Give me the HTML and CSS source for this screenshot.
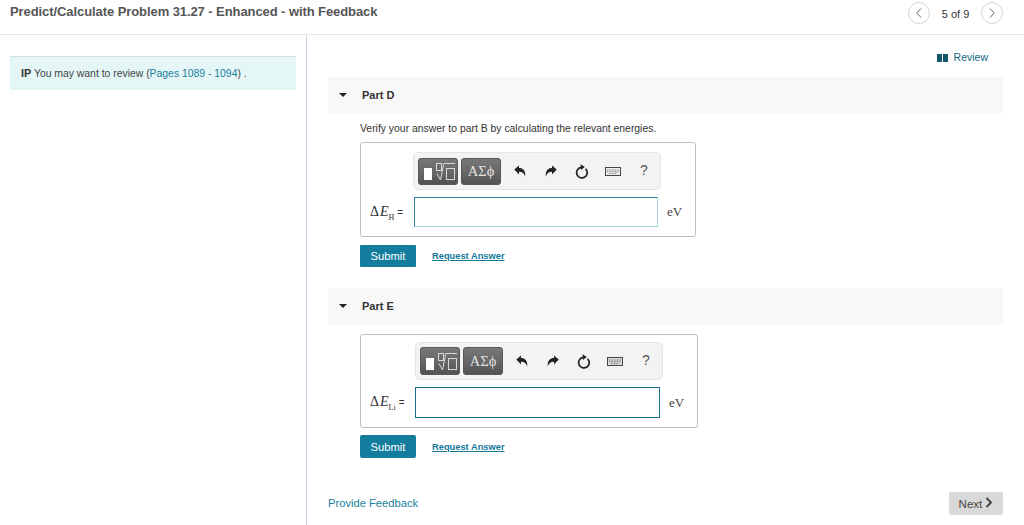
FILE: index.html
```html
<!DOCTYPE html>
<html lang="en">
<head>
<meta charset="utf-8">
<title>Predict/Calculate Problem 31.27</title>
<link rel="stylesheet" href="styles.css">
</head>
<body>
<svg class="defs" width="0" height="0" aria-hidden="true">
  <symbol id="undo" viewBox="0 0 12 12"><path d="M0.3 4.6 5 0.4V3C9 3 11.8 5.6 11.2 11.4 10.2 8.6 8.6 6.8 5 6.8V9.4Z"/></symbol>
  <symbol id="reload" viewBox="0 0 14 15"><path d="M6 3.4A5.3 5.3 0 1 0 10.6 4.8" fill="none" stroke="#222" stroke-width="1.7"/><path d="M5.6 0.2 9.8 3 5.9 6Z" fill="#222"/></symbol>
  <symbol id="tpl" viewBox="0 0 40 27"><rect x="6" y="10" width="8" height="12" fill="#fff"/><rect x="18.5" y="5.5" width="5" height="7" fill="none" stroke="#d8d8d8"/><path d="M19 15.5 22.5 22 25.8 5.5H37" fill="none" stroke="#d8d8d8"/><rect x="28.5" y="10.5" width="8" height="11" fill="none" stroke="#d8d8d8"/></symbol>
</svg>
<header class="top">
  <h1 class="title">Predict/Calculate Problem 31.27 - Enhanced - with Feedback</h1>
  <nav class="pager">
    <span class="circle"><svg width="8" height="12" viewBox="0 0 8 12"><path d="M6 1.5 1.8 6 6 10.5" fill="none" stroke="#666" stroke-width="1"/></svg></span>
    <span class="count">5 of 9</span>
    <span class="circle"><svg width="8" height="12" viewBox="0 0 8 12"><path d="M2 1.5 6.2 6 2 10.5" fill="none" stroke="#666" stroke-width="1"/></svg></span>
  </nav>
</header>
<div class="layout">
  <aside class="side">
    <p class="note"><b>IP</b> You may want to review (<a class="link">Pages 1089 - 1094</a>) .</p>
  </aside>
  <main class="content">
    <div class="review-row">
      <a class="review"><svg width="11" height="8" viewBox="0 0 11 8"><rect width="5" height="8" fill="#14566b"/><rect x="6" width="5" height="8" fill="#14566b"/></svg>Review</a>
    </div>

    <section class="part part-d">
      <div class="part-head"><span class="caret"></span><span class="part-name">Part D</span></div>
      <p class="prompt">Verify your answer to part B by calculating the relevant energies.</p>
      <div class="box box-d">
        <div class="toolbar">
          <span class="tbtn t1"><svg width="40" height="27"><use href="#tpl"/></svg></span>
          <span class="tbtn t2">ΑΣϕ</span>
          <span class="tools">
            <svg class="ic" width="12" height="12"><use href="#undo"/></svg>
            <svg class="ic flip" width="12" height="12"><use href="#undo"/></svg>
            <svg class="ic" width="14" height="15"><use href="#reload"/></svg>
            <svg class="kbd" width="16" height="9" viewBox="0 0 16 9"><rect x=".5" y=".5" width="15" height="8" fill="#eee" stroke="#444"/><path d="M2 3H14M2 4.8H14M4 6.6H12" stroke="#666" stroke-width=".8" stroke-dasharray="1 .6"/></svg>
            <span class="help">?</span>
          </span>
        </div>
        <div class="answer">
          <span class="eq"><span class="d">Δ</span><i>E</i><sub>H</sub><span class="eqs">=</span></span>
          <input class="field focused" type="text" aria-label="Delta E H">
          <span class="unit">eV</span>
        </div>
      </div>
      <div class="actions">
        <button class="submit">Submit</button>
        <a class="req">Request Answer</a>
      </div>
    </section>

    <section class="part part-e">
      <div class="part-head"><span class="caret"></span><span class="part-name">Part E</span></div>
      <div class="box box-e">
        <div class="toolbar">
          <span class="tbtn t1"><svg width="40" height="27"><use href="#tpl"/></svg></span>
          <span class="tbtn t2">ΑΣϕ</span>
          <span class="tools">
            <svg class="ic" width="12" height="12"><use href="#undo"/></svg>
            <svg class="ic flip" width="12" height="12"><use href="#undo"/></svg>
            <svg class="ic" width="14" height="15"><use href="#reload"/></svg>
            <svg class="kbd" width="16" height="9" viewBox="0 0 16 9"><rect x=".5" y=".5" width="15" height="8" fill="#ddd" stroke="#444"/><path d="M2 3H14M2 4.8H14M4 6.6H12" stroke="#555" stroke-width=".8" stroke-dasharray="1 .6"/></svg>
            <span class="help">?</span>
          </span>
        </div>
        <div class="answer">
          <span class="eq"><span class="d">Δ</span><i>E</i><sub>Li</sub><span class="eqs">=</span></span>
          <input class="field" type="text" aria-label="Delta E Li">
          <span class="unit">eV</span>
        </div>
      </div>
      <div class="actions">
        <button class="submit">Submit</button>
        <a class="req">Request Answer</a>
      </div>
    </section>

    <footer class="foot">
      <a class="feedback">Provide Feedback</a>
      <button class="next">Next <svg width="8" height="11" viewBox="0 0 8 11"><path d="M1.5 1 6 5.5 1.5 10" fill="none" stroke="#444" stroke-width="2"/></svg></button>
    </footer>
  </main>
</div>
</body>
</html>
```
FILE: styles.css
```css
* { box-sizing: border-box; }
html, body { margin: 0; height: 100%; overflow: hidden; }
body { background: #fff; color: #333; font-family: "Liberation Sans", Arial, sans-serif; font-size: 11px; width: 1024px; height: 525px; display: flex; flex-direction: column; }
.defs { display: block; height: 0; }
p { margin: 0; }
a { cursor: pointer; }

.top { height: 35px; flex: none; border-bottom: 1px solid #e6e8eb; display: flex; justify-content: space-between; padding: 0 21px 0 10px; }
.title { margin: 4px 0 0; font-size: 13px; line-height: 16px; font-weight: 700; color: #555; letter-spacing: -.08px; }
.pager { display: flex; align-items: center; height: 22px; margin-top: 2px; }
.circle { width: 22px; height: 22px; border: 1px solid #d4d4d4; border-radius: 50%; display: flex; align-items: center; justify-content: center; }
.count { width: 51px; text-align: center; font-size: 11px; color: #333; padding-top: 1px; }

.layout { flex: 1; display: flex; min-height: 0; }
.side { width: 307px; flex: none; border-right: 1px solid #c6d6e4; padding: 21px 10px 0; }
.note { height: 34px; background: #e5f6f7; border-top: 1px solid #d5dfe3; padding: 10px 11px 0; font-size: 10.4px; line-height: 13px; color: #444; }
.note b { color: #333; font-size: 10.8px; }
.link { color: #1a7f9e; }

.content { flex: 1; padding: 0 21px; display: flex; flex-direction: column; min-width: 0; }
.review-row { height: 42px; display: flex; justify-content: flex-end; padding: 16px 15px 0 0; }
.review { color: #14667f; font-size: 10.5px; line-height: 13px; display: flex; align-items: center; gap: 6px; height: 13px; }

.part-head { height: 36px; background: #f8f8f8; display: flex; align-items: center; padding-left: 11px; }
.caret { width: 0; height: 0; border-left: 4.5px solid transparent; border-right: 4.5px solid transparent; border-top: 4.5px solid #222; }
.part-name { margin-left: 14px; padding-left: 1px; font-size: 11px; font-weight: 700; color: #333; }
.prompt { margin: 9px 0 0 32px; height: 13px; font-size: 10.4px; line-height: 13px; color: #333; }

.box { margin: 7px 0 0 32px; border: 1px solid #bdbdbd; border-radius: 3px; }
.box-d { width: 336px; height: 95px; padding: 9px 0 0 52px; }
.box-e { width: 338px; height: 94px; margin-top: 9px; padding: 7px 0 0 54px; }
.toolbar { width: 248px; height: 38px; background: #f3f3f3; border: 1px solid #e4e4e4; border-radius: 5px; display: flex; align-items: center; padding: 0 4px; gap: 3px; }
.tbtn { height: 27px; width: 40px; flex: none; border-radius: 4px; background: linear-gradient(#7a7a7a, #626262 65%, #505050); box-shadow: inset 0 0 0 1px #5a5a5a; display: flex; align-items: center; justify-content: center; }
.box-e .tbtn { height: 28px; }
.t2 { color: #e2e2e2; font-family: "Liberation Serif", serif; font-size: 14.5px; }
.tools { flex: 1; display: flex; align-items: center; padding-left: 10px; color: #222; }
.ic { fill: #222; flex: none; }
.ic + .ic { margin-left: 19px; }
.flip { transform: scaleX(-1); }
.ic + .ic + .ic { margin-left: 18px; }
.kbd { margin-left: 16px; flex: none; }
.help { margin-left: 19px; font-size: 14px; color: #555; width: 8px; position: relative; top: -1px; }

.answer { display: flex; align-items: center; margin-top: 7px; height: 30px; }
.eq { width: 44px; margin-left: -44px; padding-left: 1px; font-family: "Liberation Serif", serif; font-size: 14px; line-height: 14px; color: #333; white-space: nowrap; flex: none; }
.eq .d { margin-right: 1px; }
.eq sub { font-size: 8px; line-height: 0; }
.eqs { font-family: "Liberation Sans", sans-serif; font-size: 10px; margin-left: 3px; }
.field { width: 244px; height: 30px; border: 1px solid #17708f; background: #fff; padding: 0; margin: 0 0 0 1px; outline: none; flex: none; }
.focused { border-color: #a9d3de; border-top-color: #2c7f9c; border-left-color: #2c7f9c; }
.unit { margin-left: 9px; font-family: "Liberation Serif", serif; font-size: 13px; color: #444; }

.box-e .answer { height: 31px; }
.box-e .eq { width: 46px; margin-left: -46px; }
.box-e .field { width: 245px; height: 31px; margin-left: 0; }

.actions { display: flex; align-items: center; margin: 8px 0 0 32px; height: 22px; }
.submit { width: 56px; height: 22px; background: #147d9e; color: #fff; border: 0; padding: 0; font: 11.2px "Liberation Sans", sans-serif; border-radius: 1px; }
.req { margin-left: 16px; color: #14789a; font-size: 9.3px; font-weight: 700; text-decoration: underline; }

.part-e { margin-top: 21px; }
.part-e .part-head { height: 37px; padding-bottom: 1px; }
.part-e .actions { margin-top: 7px; height: 23px; }
.part-e .submit { height: 23px; border-radius: 2px; }

.foot { display: flex; justify-content: space-between; align-items: center; margin-top: 34px; height: 23px; }
.feedback { color: #1a7f9e; font-size: 11.2px; padding-bottom: 2px; }
.next { width: 54px; height: 23px; background: #d9d9d9; color: #444; border: 0; border-radius: 2px; padding: 0 0 1px; font: 11.5px "Liberation Sans", sans-serif; }
```
